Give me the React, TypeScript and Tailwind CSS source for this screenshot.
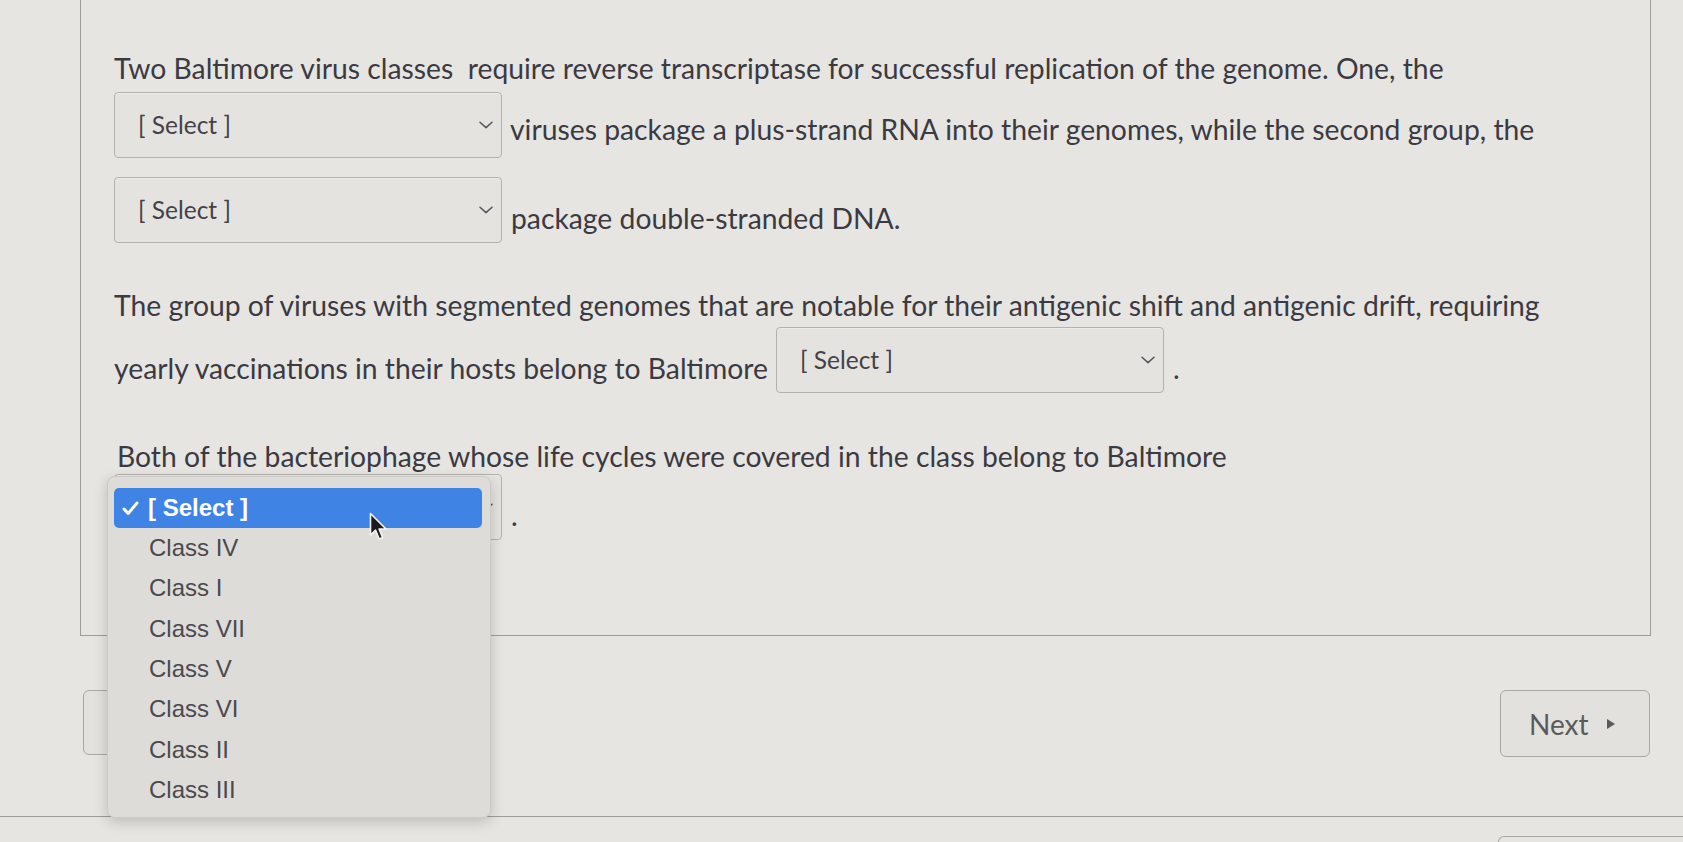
import React from "react";

const options = ["Class IV", "Class I", "Class VII", "Class V", "Class VI", "Class II", "Class III"];

function Chevron() {
  return (
    <svg width="14" height="8" viewBox="0 0 14 8" fill="none">
      <path d="M1 1.3L7 6.6L13 1.3" stroke="#55555b" strokeWidth="1.5" strokeLinecap="round" strokeLinejoin="round" />
    </svg>
  );
}

function SelectBox({ label = true }: { label?: boolean }) {
  return (
    <div className="flex h-[66px] w-[388px] shrink-0 items-center justify-between rounded-[4px] border border-[#b3b2ae] bg-[#e4e3df] pl-[23px] pr-[8px] shadow-[inset_0_1px_0_#ecebe7]">
      <span className="text-[24.5px] leading-none text-[#434248]">{label ? "[ Select ]" : ""}</span>
      <Chevron />
    </div>
  );
}

function Cursor() {
  return (
    <svg width="20" height="30" viewBox="0 0 20 30" className="absolute left-[369px] top-[512px]">
      <path
        d="M1.5 1.5 L1.5 23 L6.6 18.2 L10.2 27 L13.6 25.6 L10.1 17 L17 17 Z"
        fill="#1b1b1d"
        stroke="#f4f4f2"
        strokeWidth="1.6"
        strokeLinejoin="round"
      />
    </svg>
  );
}

export default function App() {
  return (
    <div className="relative h-[842px] w-[1683px] overflow-hidden bg-[#e6e5e1] font-['Lato',sans-serif] text-[#3b3a42]">
      {/* question card */}
      <div className="ml-[80px] h-[636px] w-[1571px] border-x border-b border-[#9d9c99] pl-[33px] pt-[52px] text-[28.3px] leading-[32px]">
        <p className="whitespace-pre">Two Baltimore virus classes  require reverse transcriptase for successful replication of the genome. One, the</p>

        <div className="mt-[8px] flex items-end">
          <SelectBox />
          <span className="ml-[8px] pb-[13px]">viruses package a plus-strand RNA into their genomes, while the second group, the</span>
        </div>

        <div className="mt-[19px] flex items-end">
          <SelectBox />
          <span className="ml-[9px] pb-[9px]">package double-stranded DNA.</span>
        </div>

        <p className="mt-[46px]">
          The group of viruses with segmented genomes that are notable for their antigenic shift and antigenic drift, requiring
        </p>
        <div className="mt-[6px] flex items-end">
          <span className="pb-[9px]">yearly vaccinations in their hosts belong to Baltimore</span>
          <div className="ml-[8px]">
            <SelectBox />
          </div>
          <span className="ml-[9px] pb-[9px]">.</span>
        </div>

        <p className="mt-[47px] pl-[3px]">Both of the bacteriophage whose life cycles were covered in the class belong to Baltimore</p>
        <div className="mt-[2px] flex items-end">
          <SelectBox label={false} />
          <span className="ml-[9px] pb-[9px]">.</span>
        </div>
      </div>

      {/* footer buttons */}
      <div className="ml-[83px] mt-[54px] flex w-[1567px] items-start justify-between">
        <div className="h-[65px] w-[150px] rounded-[6px] border border-[#a9a8a5] bg-[#e2e1dd]" />
        <div className="flex h-[67px] w-[150px] items-center rounded-[6px] border border-[#a9a8a5] bg-[#e2e1dd] pl-[28px] text-[28px] text-[#5a5a5e]">
          <span>Next</span>
          <svg width="10" height="12" viewBox="0 0 10 12" className="ml-[17px]">
            <path d="M1 1L9 6L1 11Z" fill="#5a5a5e" />
          </svg>
        </div>
      </div>

      <div className="mt-[59px] border-t border-[#9d9c99]" />
      <div className="ml-[1498px] mt-[19px] h-[20px] rounded-tl-[6px] border-l border-t border-[#a9a8a5]" />

      {/* open dropdown list */}
      <div className="absolute left-[107px] top-[476px] h-[342px] w-[384px] rounded-[8px] border border-[#cbcac6] bg-[#dedcd8] pl-[6px] pr-[8px] pt-[11px] font-['Liberation_Sans',Arial,sans-serif] text-[24px] text-[#4a494f] shadow-[0_4px_14px_rgba(0,0,0,0.18)]">
        <div className="flex h-[40px] items-center rounded-[5px] bg-[#3f84e5] pl-[8px] font-semibold text-white">
          <svg width="17" height="15" viewBox="0 0 17 15" className="mr-[9px]">
            <path d="M2 8L6.2 12.5L15 2" fill="none" stroke="#ffffff" strokeWidth="3" strokeLinecap="round" strokeLinejoin="round" />
          </svg>
          <span>[ Select ]</span>
        </div>
        {options.map((o) => (
          <div key={o} className="flex h-[40.3px] items-center pl-[35px]">
            {o}
          </div>
        ))}
      </div>

      <Cursor />
    </div>
  );
}
